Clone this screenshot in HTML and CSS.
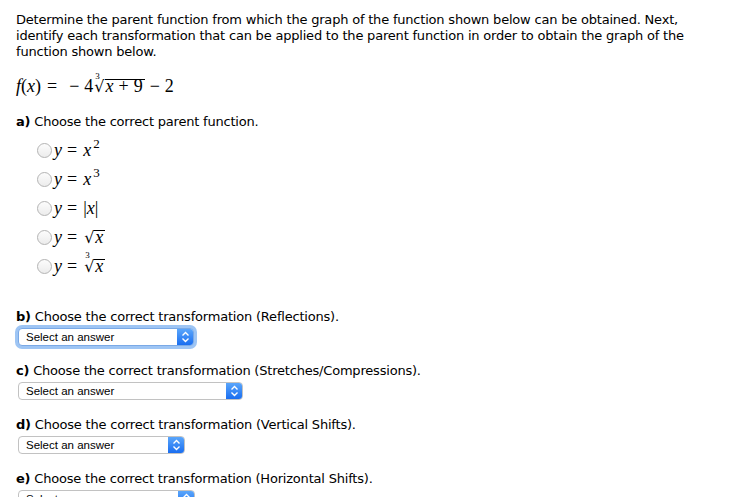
FILE: index.html
```html
<!DOCTYPE html>
<html lang="en">
<head>
    <meta charset="UTF-8">
    <title>Parent function and transformations</title>
    <link rel="stylesheet" href="styles.css">
</head>
<body>
    <div class="question">
        <p class="intro">Determine the parent function from which the graph of the function shown below can be obtained. Next, identify each transformation that can be applied to the parent function in order to obtain the graph of the function shown below.</p>

        <p class="formula">
            <span class="mi">f</span><span class="mo">(</span><span class="mi">x</span><span class="mo">)</span><span class="mo rel">=</span><span class="mo bin">&minus;</span><span class="mn">4</span><span class="root"><sup class="index">3</sup><span class="radical">&radic;</span><span class="radicand"><span class="mi">x</span><span class="mo bin">+</span><span class="mn">9</span></span></span><span class="mo bin">&minus;</span><span class="mn">2</span>
        </p>

        <div class="part part-a">
            <p class="prompt"><b>a)</b> Choose the correct parent function.</p>
            <ul class="choices">
                <li><span class="radio"></span><span class="mi">y</span><span class="mo rel">=</span><span class="mi">x</span><sup class="pow">2</sup></li>
                <li><span class="radio"></span><span class="mi">y</span><span class="mo rel">=</span><span class="mi">x</span><sup class="pow">3</sup></li>
                <li><span class="radio"></span><span class="mi">y</span><span class="mo rel">=</span><span class="mo">|</span><span class="mi">x</span><span class="mo">|</span></li>
                <li><span class="radio"></span><span class="mi">y</span><span class="mo rel">=</span><span class="root"><span class="radical">&radic;</span><span class="radicand"><span class="mi">x</span></span></span></li>
                <li><span class="radio"></span><span class="mi">y</span><span class="mo rel">=</span><span class="root"><sup class="index">3</sup><span class="radical">&radic;</span><span class="radicand"><span class="mi">x</span></span></span></li>
            </ul>
        </div>

        <div class="part part-b">
            <p class="prompt"><b>b)</b> Choose the correct transformation (Reflections).</p>
            <div class="select focused w-b"><select><option>Select an answer</option></select><span class="arrow"><svg width="9" height="12" viewBox="0 0 9 12"><path d="M1.5 4.5 L4.5 1.5 L7.5 4.5 M1.5 7.5 L4.5 10.5 L7.5 7.5" fill="none" stroke="#fff" stroke-width="1.4"/></svg></span></div>
        </div>

        <div class="part">
            <p class="prompt"><b>c)</b> Choose the correct transformation (Stretches/Compressions).</p>
            <div class="select w-c"><select><option>Select an answer</option></select><span class="arrow"><svg width="9" height="12" viewBox="0 0 9 12"><path d="M1.5 4.5 L4.5 1.5 L7.5 4.5 M1.5 7.5 L4.5 10.5 L7.5 7.5" fill="none" stroke="#fff" stroke-width="1.4"/></svg></span></div>
        </div>

        <div class="part">
            <p class="prompt"><b>d)</b> Choose the correct transformation (Vertical Shifts).</p>
            <div class="select w-d"><select><option>Select an answer</option></select><span class="arrow"><svg width="9" height="12" viewBox="0 0 9 12"><path d="M1.5 4.5 L4.5 1.5 L7.5 4.5 M1.5 7.5 L4.5 10.5 L7.5 7.5" fill="none" stroke="#fff" stroke-width="1.4"/></svg></span></div>
        </div>

        <div class="part">
            <p class="prompt"><b>e)</b> Choose the correct transformation (Horizontal Shifts).</p>
            <div class="select w-e"><select><option>Select an answer</option></select><span class="arrow"><svg width="9" height="12" viewBox="0 0 9 12"><path d="M1.5 4.5 L4.5 1.5 L7.5 4.5 M1.5 7.5 L4.5 10.5 L7.5 7.5" fill="none" stroke="#fff" stroke-width="1.4"/></svg></span></div>
        </div>
    </div>
</body>
</html>
```

FILE: styles.css
```css
body {
    margin: 0;
    background: #fff;
    color: #000;
    font-family: 'DejaVu Sans', 'Verdana', sans-serif;
    font-size: 13px;
    line-height: 16px;
    overflow: hidden;
}
.question {
    padding: 12px 16px 0 16px;
    width: 690px;
}
p {
    margin: 0;
}
.intro, .prompt {
    letter-spacing: -0.2px;
}
.formula {
    margin-top: 16px;
    line-height: 20px;
    white-space: nowrap;
}
.mi {
    font-family: 'Liberation Serif', serif;
    font-style: italic;
    font-size: 18px;
}
.mo, .mn {
    font-family: 'Liberation Serif', serif;
    font-size: 18px;
}
.rel {
    margin: 0 6px;
}
.bin {
    margin: 0 5px;
}
.formula .rel {
    margin: 0 7px 0 6px;
}
.formula > .bin:first-of-type {
    margin: 0 5px 0 7px;
}
.root {
    position: relative;
    display: inline-block;
    margin-left: 1px;
}
.index {
    position: absolute;
    left: 1px;
    top: -4px;
    font-family: 'Liberation Serif', serif;
    font-size: 9px;
    line-height: 9px;
}
.radical {
    font-family: 'DejaVu Sans', sans-serif;
    font-size: 16px;
}
.radicand {
    border-top: 1px solid #000;
    padding: 0 2px 0 1px;
}
.part {
    margin-top: 17px;
}
.part-a {
    margin-top: 16px;
}
.choices {
    list-style: none;
    margin: 9px 0 0 0;
    padding: 0 0 0 22px;
}
.choices li {
    display: flex;
    align-items: baseline;
    height: 29px;
    line-height: 22px;
}
.choices .rel {
    margin: 0 6px 0 5px;
}
.pow {
    font-family: 'Liberation Serif', serif;
    font-size: 13px;
    line-height: 0;
    position: relative;
    top: -8px;
    margin-left: 2px;
}
.radio {
    display: inline-block;
    width: 13px;
    height: 13px;
    border: 1px solid #b4b4b4;
    border-radius: 50%;
    background: linear-gradient(#fcfcfc, #ececec);
    align-self: center;
    margin: 0 2px 0 -1px;
    position: relative;
    top: -3px;
}
.part-b {
    margin-top: 25px;
}
.select {
    display: flex;
    height: 18px;
    margin: 3px 0 0 2px;
    border: 1px solid #c2c2c2;
    border-radius: 4px;
    background: #fff;
    box-sizing: border-box;
    overflow: hidden;
}
.select select {
    flex: 1;
    appearance: none;
    border: none;
    background: transparent;
    font-family: 'Liberation Sans', Arial, sans-serif;
    font-size: 11.5px;
    padding: 0 0 0 7px;
    margin: 0;
    color: #000;
    outline: none;
}
.arrow {
    width: 16px;
    display: flex;
    align-items: center;
    justify-content: center;
    background: linear-gradient(#5aa6fb, #1a6ef0);
}
.focused {
    box-shadow: 0 0 0 3px #9ec5f4;
    border-color: #7aa9e6;
}
.w-b { width: 176px; }
.w-c { width: 225px; }
.w-d { width: 167px; }
.w-e { width: 177px; }
```
